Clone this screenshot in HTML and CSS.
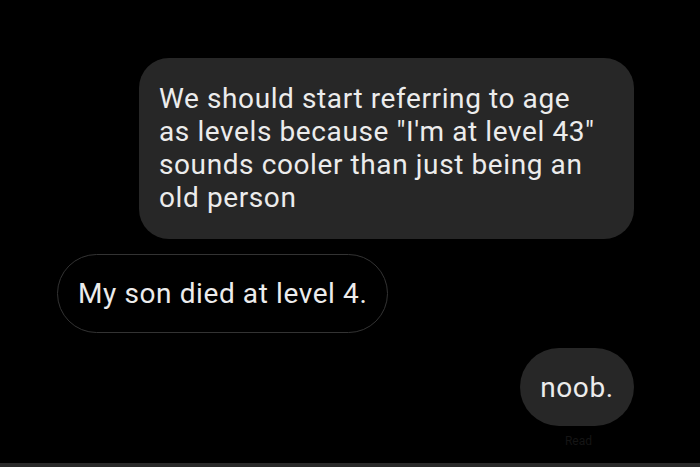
FILE: index.html
```html
<!DOCTYPE html>
<html>
<head>
<meta charset="utf-8">
<link rel="stylesheet" href="styles.css">
</head>
<body>
<div class="chat">
  <div class="row right">
    <div class="bubble sent long">We should start referring to age<br>as levels because "I'm at level 43"<br>sounds cooler than just being an<br>old person</div>
  </div>
  <div class="row left">
    <div class="bubble received">My son died at level 4.</div>
  </div>
  <div class="row right">
    <div class="bubble sent short">noob.</div>
  </div>
  <div class="row right status-row">
    <span class="status">Read</span>
  </div>
</div>
<div class="bottom-bar"></div>
</body>
</html>
```

FILE: styles.css
```css
html, body {
  margin: 0;
  padding: 0;
  background: #000;
  width: 700px;
  height: 467px;
  overflow: hidden;
}
body {
  display: flex;
  flex-direction: column;
  font-family: Roboto, "Liberation Sans", sans-serif;
}
.chat {
  flex: 1;
  display: flex;
  flex-direction: column;
  padding: 58px 66px 0 57px;
}
.row {
  display: flex;
}
.row.right {
  justify-content: flex-end;
}
.bubble {
  box-sizing: border-box;
  color: #ececec;
  font-size: 28px;
  line-height: 33px;
  letter-spacing: 0.6px;
  white-space: nowrap;
}
.sent {
  background: #272727;
}
.long {
  width: 495px;
  height: 181px;
  border-radius: 30px;
  padding: 24px 20px 0 20px;
}
.received {
  margin-top: 15px;
  height: 79px;
  border-radius: 40px;
  border: 1.5px solid #333;
  padding: 0 20px;
  display: flex;
  align-items: center;
}
.short {
  margin-top: 15px;
  width: 114px;
  height: 78px;
  border-radius: 39px;
  display: flex;
  align-items: center;
  justify-content: center;
}
.status-row {
  padding-right: 42px;
  margin-top: 8px;
}
.status {
  color: #151515;
  font-size: 12px;
}
.bottom-bar {
  height: 4px;
  background: #2a2a2a;
}
```
